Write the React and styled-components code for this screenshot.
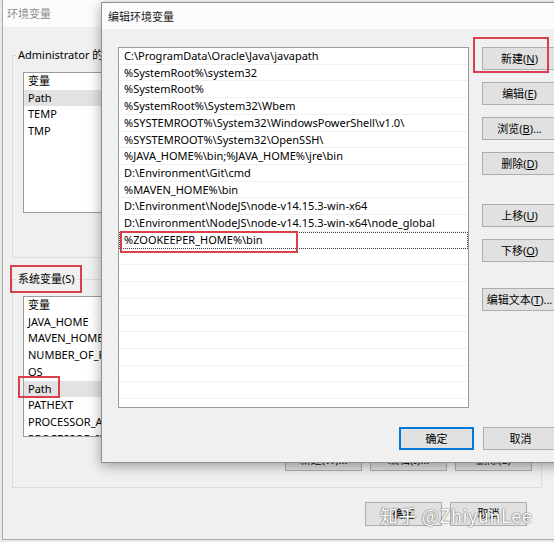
import React from 'react';
import styled, {createGlobalStyle} from 'styled-components';

const ROW_H = 16.73;

const GlobalStyle = createGlobalStyle`
    html, body {
        margin: 0;
        padding: 0;
    }
    body {
        font-family: "Noto Sans", "Noto Sans CJK SC", sans-serif;
        font-size: 11px;
        color: #000;
    }
`;

const Desktop = styled.div`
    position: relative;
    width: 554px;
    height: 542px;
    overflow: hidden;
    background: #e9e9e9;
`;

// background window: 环境变量
const EnvWindow = styled.div`
    box-sizing: border-box;
    margin-left: 2px;
    width: 570px;
    height: 540px;
    display: flex;
    flex-direction: column;
    background: #f0f0f0;
    border-left: 1px solid #a9a9a9;
    border-bottom: 1px solid #a9a9a9;
`;

const TitleBar = styled.div`
    flex: none;
    height: ${(p) => p.$h}px;
    line-height: ${(p) => p.$h}px;
    padding-left: ${(p) => p.$pad}px;
    background: #fcfcfc;
    color: ${(p) => (p.$inactive ? '#8e8e8e' : '#1a1a1a')};
    font-family: "Noto Sans CJK SC", sans-serif;
    white-space: nowrap;
`;

const WindowBody = styled.div`
    flex: 1;
    display: flex;
    flex-direction: column;
    padding: 20px 30px 0 9px;
`;

const Group = styled.fieldset`
    margin: ${(p) => p.$top}px 0 0 0;
    min-width: 0;
    padding: 9px 9px ${(p) => p.$bottom}px 10px;
    border: 1px solid #dcdcdc;
`;

const Caption = styled.legend`
    box-sizing: border-box;
    height: 16px;
    margin-left: -7px;
    padding: 0 2px;
    line-height: 16px;
    white-space: nowrap;
`;

const VarList = styled.div`
    box-sizing: border-box;
    height: 141px;
    overflow: hidden;
    background: #fff;
    border: 1px solid #9b9b9b;
`;

const Row = styled.div`
    box-sizing: border-box;
    height: ${ROW_H}px;
    line-height: ${ROW_H}px;
    padding-left: ${(p) => p.$pad}px;
    white-space: nowrap;
    overflow: hidden;
    background: ${(p) => (p.$selected ? '#e2e2e2' : 'transparent')};
    border-bottom: ${(p) => (p.$lined ? '1px solid #f1f1f1' : 'none')};
    outline: ${(p) => (p.$focused ? '1px dotted #444' : 'none')};
    outline-offset: -1px;
`;

const ButtonRow = styled.div`
    display: flex;
    justify-content: flex-end;
    gap: 8px;
    margin-top: ${(p) => p.$top}px;
    padding-right: ${(p) => p.$right || 0}px;
`;

const Btn = styled.div`
    box-sizing: border-box;
    flex: none;
    width: ${(p) => p.$w || 75}px;
    height: ${(p) => p.$h || 23}px;
    line-height: ${(p) => (p.$h || 23) - 2}px;
    text-align: center;
    white-space: nowrap;
    background: #e1e1e1;
    border: 1px solid ${(p) => (p.$primary ? '#0078d7' : '#adadad')};
    box-shadow: ${(p) => (p.$primary ? 'inset 0 0 0 1px #0078d7' : 'none')};
    margin-top: ${(p) => p.$gap || 0}px;
    u {
        text-decoration: underline;
        text-underline-offset: 1px;
    }
`;

// front dialog: 编辑环境变量
const Dialog = styled.div`
    position: absolute;
    left: 101px;
    top: 2px;
    box-sizing: border-box;
    width: 472px;
    height: 461px;
    display: flex;
    flex-direction: column;
    background: #f0f0f0;
    border: 1px solid #8f8f8f;
    box-shadow: 0 3px 12px rgba(0, 0, 0, 0.35);
`;

const DialogBody = styled.div`
    flex: 1;
    display: flex;
    flex-direction: column;
    padding: 18px 14px 12px 16px;
`;

const DialogMain = styled.div`
    display: flex;
    align-items: flex-start;
    gap: 13px;
`;

const PathList = styled.div`
    box-sizing: border-box;
    width: 351px;
    height: 361px;
    overflow: hidden;
    background: #fff;
    border: 1px solid #9b9b9b;
`;

const SideButtons = styled.div`
    display: flex;
    flex-direction: column;
`;

const DialogFooter = styled.div`
    display: flex;
    justify-content: flex-end;
    gap: 9px;
    margin-top: 19px;
`;

const Mark = styled.div`
    position: absolute;
    left: ${(p) => p.$x}px;
    top: ${(p) => p.$y}px;
    width: ${(p) => p.$w}px;
    height: ${(p) => p.$h}px;
    box-sizing: border-box;
    border: 2px solid #d8414a;
    pointer-events: none;
`;

const Watermark = styled.div`
    position: absolute;
    left: 380px;
    top: 504px;
    font-family: "Noto Sans CJK SC", sans-serif;
    font-size: 18px;
    line-height: 22px;
    letter-spacing: 0.6px;
    color: #fff;
    white-space: nowrap;
    text-shadow: 0 0 1px #555, 0 0 2px rgba(0, 0, 0, 0.45);
`;

const userVars = ['变量', 'Path', 'TEMP', 'TMP'];
const systemVars = [
    '变量', 'JAVA_HOME', 'MAVEN_HOME', 'NUMBER_OF_PROCESSORS', 'OS', 'Path',
    'PATHEXT', 'PROCESSOR_ARCHITECTURE', 'PROCESSOR_IDENTIFIER',
];
const paths = [
    'C:\\ProgramData\\Oracle\\Java\\javapath',
    '%SystemRoot%\\system32',
    '%SystemRoot%',
    '%SystemRoot%\\System32\\Wbem',
    '%SYSTEMROOT%\\System32\\WindowsPowerShell\\v1.0\\',
    '%SYSTEMROOT%\\System32\\OpenSSH\\',
    '%JAVA_HOME%\\bin;%JAVA_HOME%\\jre\\bin',
    'D:\\Environment\\Git\\cmd',
    '%MAVEN_HOME%\\bin',
    'D:\\Environment\\NodeJS\\node-v14.15.3-win-x64',
    'D:\\Environment\\NodeJS\\node-v14.15.3-win-x64\\node_global',
    '%ZOOKEEPER_HOME%\\bin',
];
const EDITING = paths.length - 1;

const sideButtons = [
    {label: '新建', key: 'N', gap: 0},
    {label: '编辑', key: 'E', gap: 12},
    {label: '浏览', key: 'B', tail: '...', gap: 12},
    {label: '删除', key: 'D', gap: 12},
    {label: '上移', key: 'U', gap: 29},
    {label: '下移', key: 'O', gap: 12},
    {label: '编辑文本', key: 'T', tail: '...', gap: 26},
];

const VarGroup = ({caption, vars, buttons, top, bottom}) => (
    <Group $top={top} $bottom={bottom}>
        <Caption>{caption}</Caption>
        <VarList>
            {vars.map((v, i) => (
                <Row key={i} $pad={4} $selected={v === 'Path'}>{v}</Row>
            ))}
        </VarList>
        <ButtonRow $top={11}>
            {buttons.map((b) => <Btn key={b} $w={77}>{b}</Btn>)}
        </ButtonRow>
    </Group>
);

const App = () => (
    <>
        <GlobalStyle/>
        <Desktop>
            <EnvWindow>
                <TitleBar $h={27} $pad={4} $inactive={true}>{'环境变量'}</TitleBar>
                <WindowBody>
                    <VarGroup
                        caption='Administrator 的用户变量(U)'
                        vars={userVars}
                        buttons={['新建(N)...', '编辑(E)...', '删除(D)']}
                        top={0}
                        bottom={10}
                    />
                    <VarGroup
                        caption='系统变量(S)'
                        vars={systemVars}
                        buttons={['新建(W)...', '编辑(I)...', '删除(L)']}
                        top={13}
                        bottom={16}
                    />
                    <ButtonRow $top={14} $right={15}>
                        <Btn $w={77} $h={24}>{'确定'}</Btn>
                        <Btn $w={77} $h={24}>{'取消'}</Btn>
                    </ButtonRow>
                </WindowBody>
            </EnvWindow>

            <Dialog>
                <TitleBar $h={26} $pad={6}>{'编辑环境变量'}</TitleBar>
                <DialogBody>
                    <DialogMain>
                        <PathList>
                            {paths.map((p, i) => (
                                <Row key={i} $pad={5} $lined={true} $focused={i === EDITING}>{p}</Row>
                            ))}
                            {Array.from({length: 10}, (_, i) => (
                                <Row key={`e${i}`} $pad={5} $lined={true}/>
                            ))}
                        </PathList>
                        <SideButtons>
                            {sideButtons.map((b) => (
                                <Btn key={b.key} $gap={b.gap}>
                                    {b.label}(<u>{b.key}</u>){b.tail}
                                </Btn>
                            ))}
                        </SideButtons>
                    </DialogMain>
                    <DialogFooter>
                        <Btn $primary={true}>{'确定'}</Btn>
                        <Btn>{'取消'}</Btn>
                    </DialogFooter>
                </DialogBody>
            </Dialog>

            <Mark $x={473} $y={37} $w={76} $h={36}/>
            <Mark $x={120} $y={231} $w={178} $h={22}/>
            <Mark $x={10} $y={265} $w={72} $h={28}/>
            <Mark $x={18} $y={376} $w={42} $h={22}/>
            <Watermark>{'知乎 @ZhiyunLee'}</Watermark>
        </Desktop>
    </>
);

export default App;
